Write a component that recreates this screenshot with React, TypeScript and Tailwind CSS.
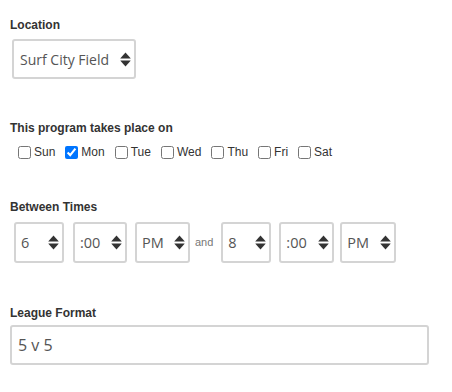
import React from "react";

const SortIcon = () => (
  <svg width="11" height="15" viewBox="0 0 11 15" className="shrink-0">
    <path d="M5.5 0.6 L10.6 6.2 Q10.9 6.6 10.4 6.6 L0.6 6.6 Q0.1 6.6 0.4 6.2 Z" fill="#333" />
    <path d="M5.5 14.4 L10.6 8.8 Q10.9 8.4 10.4 8.4 L0.6 8.4 Q0.1 8.4 0.4 8.8 Z" fill="#333" />
  </svg>
);

const FieldLabel = ({ children, className = "" }: { children: React.ReactNode; className?: string }) => (
  <div className={`text-[12px] leading-4 font-bold text-[#333] ${className}`}>{children}</div>
);

const SelectBox = ({ value, className = "" }: { value: string; className?: string }) => (
  <div
    className={`flex items-center justify-between border-2 border-[#d4d4d4] rounded-[3px] bg-white pl-[5px] pr-[3px] text-[14.5px] text-[#555] ${className}`}
  >
    <span>{value}</span>
    <SortIcon />
  </div>
);

const days = ["Sun", "Mon", "Tue", "Wed", "Thu", "Fri", "Sat"];

export default function App() {
  return (
    <div
      className="w-[452px] h-[392px] bg-white pl-[10px] pt-[17px]"
      style={{ fontFamily: '"Liberation Sans", Arial, sans-serif' }}
    >
      <FieldLabel>Location</FieldLabel>
      <div style={{ fontFamily: '"Open Sans", sans-serif' }}>
        <SelectBox value="Surf City Field" className="mt-[6px] ml-[2px] w-[124px] h-[40px] !text-[14px] !pl-[6px]" />
      </div>

      <FieldLabel className="mt-[41px]">This program takes place on</FieldLabel>
      <div className="mt-[8px] ml-[8px] flex items-center h-4 gap-[10px] text-[12px] text-[#333]">
        {days.map((d) => (
          <label key={d} className="flex items-center gap-[3px]">
            <input type="checkbox" defaultChecked={d === "Mon"} className="m-0 w-[13px] h-[13px]" />
            <span>{d}</span>
          </label>
        ))}
      </div>

      <FieldLabel className="mt-[39px]">Between Times</FieldLabel>
      <div
        className="mt-[7px] ml-[4px] flex items-center h-[41px]"
        style={{ fontFamily: '"Open Sans", sans-serif' }}
      >
        <SelectBox value="6" className="w-[50px] h-[41px]" />
        <SelectBox value=":00" className="ml-[9px] w-[54px] h-[41px]" />
        <SelectBox value="PM" className="ml-[8px] w-[55px] h-[41px]" />
        <span
          className="ml-[5px] text-[11px] text-[#777]"
          style={{ fontFamily: '"Liberation Sans", Arial, sans-serif' }}
        >
          and
        </span>
        <SelectBox value="8" className="ml-[8px] w-[50px] h-[41px]" />
        <SelectBox value=":00" className="ml-[8px] w-[55px] h-[41px]" />
        <SelectBox value="PM" className="ml-[6px] w-[56px] h-[41px]" />
      </div>

      <FieldLabel className="mt-[42px]">League Format</FieldLabel>
      <div
        className="mt-[4px] w-[419px] h-[40px] flex items-center border-2 border-[#d4d4d4] rounded-[3px] pl-[6px] text-[16px] text-[#555]"
        style={{ fontFamily: '"Open Sans", sans-serif' }}
      >
        5 v 5
      </div>
    </div>
  );
}
